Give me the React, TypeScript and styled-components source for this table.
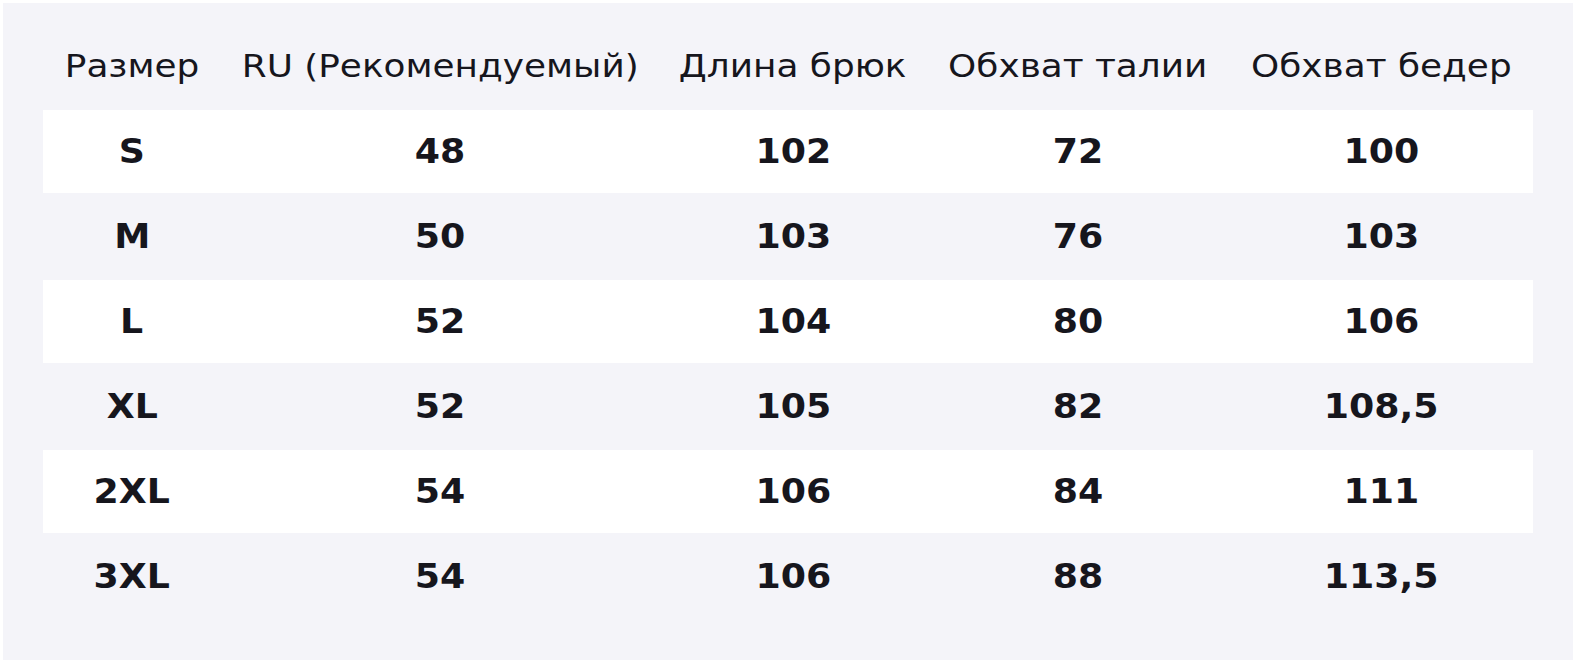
import React from "react";
import styled, { createGlobalStyle } from "styled-components";

const Global = createGlobalStyle`
  html, body { margin: 0; padding: 0; background: #ffffff; }
  body { font-family: "DejaVu Sans", "Noto Sans", sans-serif; }
`;

const Panel = styled.div`
  box-sizing: border-box;
  margin: 3px;
  width: 1570px;
  height: 657px;
  padding: 40px;
  background: #f4f4f9;
`;

const Grid = styled.div`
  display: grid;
  grid-template-columns: 178px 438px 268px 302px 304px;
`;

const HeadCell = styled.div`
  box-sizing: border-box;
  height: 67px;
  padding-top: 5px;
  text-align: center;
  font-size: 32px;
  line-height: 37px;
  font-weight: 400;
  color: #16161d;
  white-space: nowrap;
`;

const Cell = styled.div<{ $light: boolean }>`
  height: ${(p) => (p.$light ? 83 : 87)}px;
  display: flex;
  align-items: center;
  justify-content: center;
  background: ${(p) => (p.$light ? "#ffffff" : "transparent")};
  font-size: 33px;
  font-weight: 700;
  color: #16161d;
  white-space: nowrap;
`;

const Wide = styled.span<{ $scale: number }>`
  display: inline-block;
  transform: scaleX(${(p) => p.$scale});
  transform-origin: center;
`;

const headers = ["Размер", "RU (Рекомендуемый)", "Длина брюк", "Обхват талии", "Обхват бедер"];

const rows = [
  ["S", "48", "102", "72", "100"],
  ["M", "50", "103", "76", "103"],
  ["L", "52", "104", "80", "106"],
  ["XL", "52", "105", "82", "108,5"],
  ["2XL", "54", "106", "84", "111"],
  ["3XL", "54", "106", "88", "113,5"],
];

export default function App() {
  return (
    <>
      <Global />
      <Panel>
        <Grid>
          {headers.map((h) => (
            <HeadCell key={h}>
              <Wide $scale={1.12}>{h}</Wide>
            </HeadCell>
          ))}
          {rows.map((r, i) =>
            r.map((v, j) => (
              <Cell key={`${i}-${j}`} $light={i % 2 === 0}>
                <Wide $scale={1.1}>{v}</Wide>
              </Cell>
            ))
          )}
        </Grid>
      </Panel>
    </>
  );
}
